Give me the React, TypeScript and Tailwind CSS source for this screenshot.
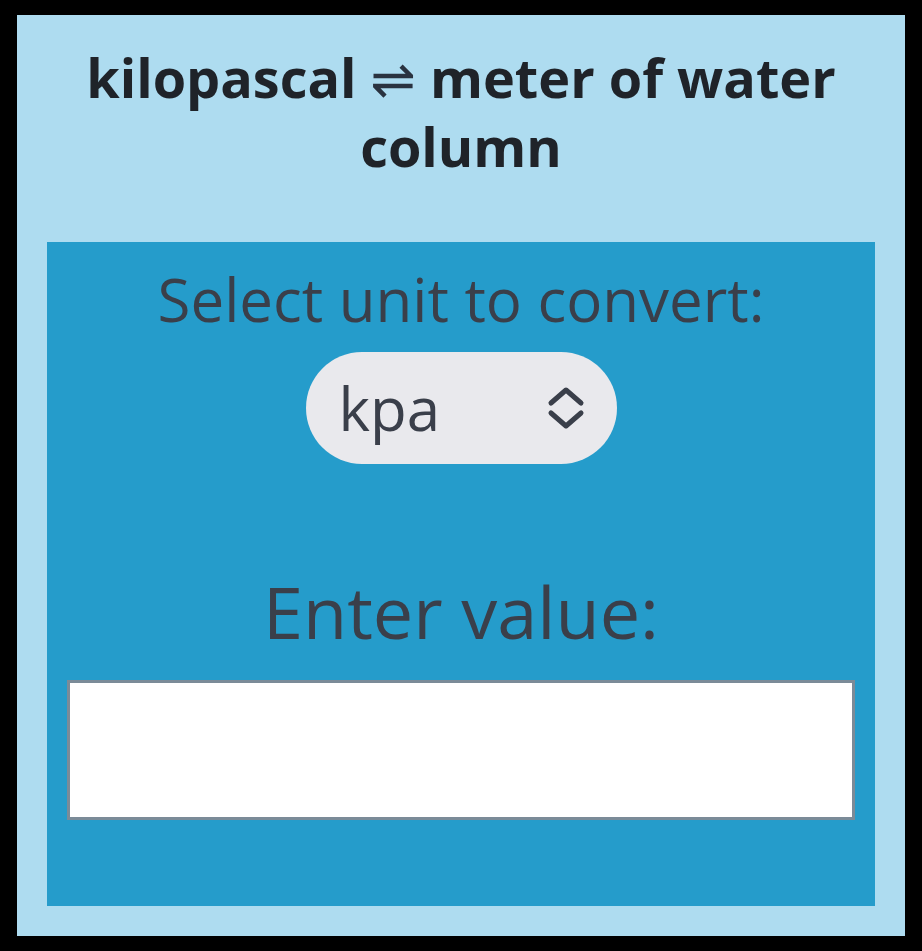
export default function App() {
  return (
    <div
      className="w-[922px] h-[951px] bg-black pt-[15px] pb-[15px] px-[17px]"
      style={{ fontFamily: '"Open Sans", "DejaVu Sans", sans-serif' }}
    >
      <div className="h-full bg-[#aedcf0] flex flex-col pt-[28px] px-[30px] pb-[30px]">
        <h1 className="text-center font-bold text-[54px] leading-[69px] text-[#1f2329] px-[10px]">
          kilopascal <span className="font-normal text-[#2a3340]">⇌</span> meter of water column
        </h1>

        <div className="mt-[61px] flex-1 bg-[#259ccb] flex flex-col items-center pt-[21px] px-[20px]">
          <label className="text-[60px] leading-[72px] text-[#3a3f4a]">Select unit to convert:</label>

          <div className="mt-[17px] w-[311px] h-[112px] rounded-full bg-[#e9e9ed] flex items-center justify-between pl-[33px] pr-[32px]">
            <span className="text-[60px] leading-[60px] text-[#3a3f4a]">kpa</span>
            <svg width="38" height="44" viewBox="0 0 38 44" fill="none" stroke="#3a3f4a" strokeWidth="5" strokeLinecap="round" strokeLinejoin="round">
              <path d="M4 17 L19 4 L34 17" />
              <path d="M4 27 L19 40 L34 27" />
            </svg>
          </div>

          <label className="mt-[104px] text-[72px] leading-[86px] text-[#3a3f4a]">Enter value:</label>

          <input
            type="text"
            className="mt-[26px] w-full h-[140px] bg-white border-[3px] border-[#7b8b98] outline-none"
          />
        </div>
      </div>
    </div>
  );
}
